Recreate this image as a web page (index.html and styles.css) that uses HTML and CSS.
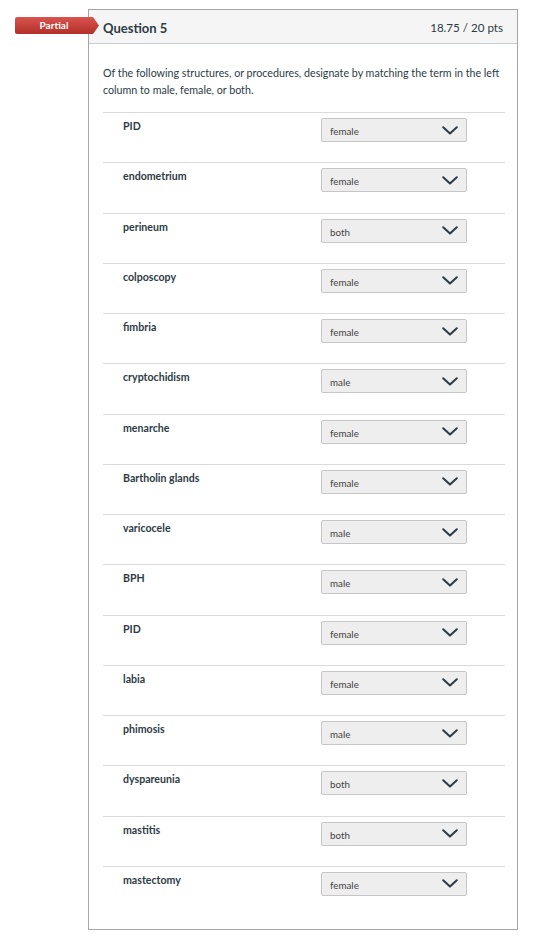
FILE: index.html
```html
<!DOCTYPE html>
<html lang="en">
<head>
    <meta charset="UTF-8">
    <meta name="viewport" content="width=device-width, initial-scale=1.0">
    <title>Question 5</title>
    <link rel="stylesheet" href="styles.css">
</head>
<body>
    <div class="page">
        <div class="badge">Partial</div>

        <div class="question">
            <div class="question-header">
                <span class="question-name">Question 5</span>
                <span class="question-points">18.75 / 20 pts</span>
            </div>

            <div class="question-body">
                <p class="question-text">Of the following structures, or procedures, designate by matching the term in the left column to male, female, or both.</p>

                <div class="answers" id="answers"></div>
            </div>
        </div>
    </div>

    <script>
        const answers = [
            ['PID', 'female'],
            ['endometrium', 'female'],
            ['perineum', 'both'],
            ['colposcopy', 'female'],
            ['fimbria', 'female'],
            ['cryptochidism', 'male'],
            ['menarche', 'female'],
            ['Bartholin glands', 'female'],
            ['varicocele', 'male'],
            ['BPH', 'male'],
            ['PID', 'female'],
            ['labia', 'female'],
            ['phimosis', 'male'],
            ['dyspareunia', 'both'],
            ['mastitis', 'both'],
            ['mastectomy', 'female']
        ];

        const list = document.getElementById('answers');

        answers.forEach(function(item) {
            const row = document.createElement('div');
            row.className = 'answer-row';
            row.innerHTML =
                '<div class="answer-term">' + item[0] + '</div>' +
                '<div class="select">' +
                    '<span class="select-value">' + item[1] + '</span>' +
                    '<svg class="chevron" width="16" height="9" viewBox="0 0 16 9">' +
                        '<path d="M1.2 1.2 L8 7.6 L14.8 1.2" fill="none" stroke="#2d3b45" stroke-width="2" stroke-linecap="round" stroke-linejoin="round"/>' +
                    '</svg>' +
                '</div>';
            list.appendChild(row);
        });
    </script>
</body>
</html>
```

FILE: styles.css
```css
* {
    margin: 0;
    padding: 0;
    box-sizing: border-box;
    font-family: Lato, "Open Sans", sans-serif;
}

body {
    background: #fff;
    color: #2d3b45;
}

.page {
    position: relative;
    padding: 9px 30px 18px 88px;
}

.badge {
    position: absolute;
    top: 17px;
    left: 15px;
    width: 84px;
    height: 17px;
    padding-right: 6px;
    background: linear-gradient(#d9544e, #b32f2a);
    border-radius: 2px 0 0 2px;
    clip-path: polygon(0 0, 78px 0, 84px 50%, 78px 100%, 0 100%);
    color: #fff;
    font-size: 10px;
    font-weight: 700;
    line-height: 17px;
    text-align: center;
    z-index: 10;
}

.question {
    width: 430px;
    border: 1px solid #a5a5a5;
}

.question-header {
    display: flex;
    justify-content: space-between;
    align-items: center;
    height: 34px;
    padding: 0 14px;
    background: #f5f5f5;
    border-bottom: 1px solid #c7cdd1;
}

.question-name {
    font-size: 13px;
    font-weight: 700;
    color: #2d3b45;
    padding-top: 2px;
}

.question-points {
    font-size: 11.6px;
    color: #2d3b45;
    padding-top: 1px;
}

.question-body {
    padding: 20px 12px 13px 14px;
}

.question-text {
    font-size: 10.7px;
    line-height: 17px;
    color: #2d3b45;
    margin: 0 -6px 14px 0;
}

.answer-row {
    display: grid;
    grid-template-columns: 218px 146px;
    align-items: start;
    height: 50.27px;
    padding-top: 5px;
    border-top: 1px solid #dadada;
}

.answer-term {
    padding-left: 20px;
    font-size: 10.6px;
    font-weight: 700;
    line-height: 16px;
    color: #2d3b45;
}

.select {
    display: flex;
    justify-content: space-between;
    align-items: center;
    height: 24px;
    padding: 0 8px 0 8px;
    background: #eeeeee;
    border: 1px solid #c6c6c6;
    border-radius: 2px;
}

.select-value {
    font-size: 9.8px;
    color: #444;
    padding-top: 2px;
}

.chevron {
    display: block;
}
```
